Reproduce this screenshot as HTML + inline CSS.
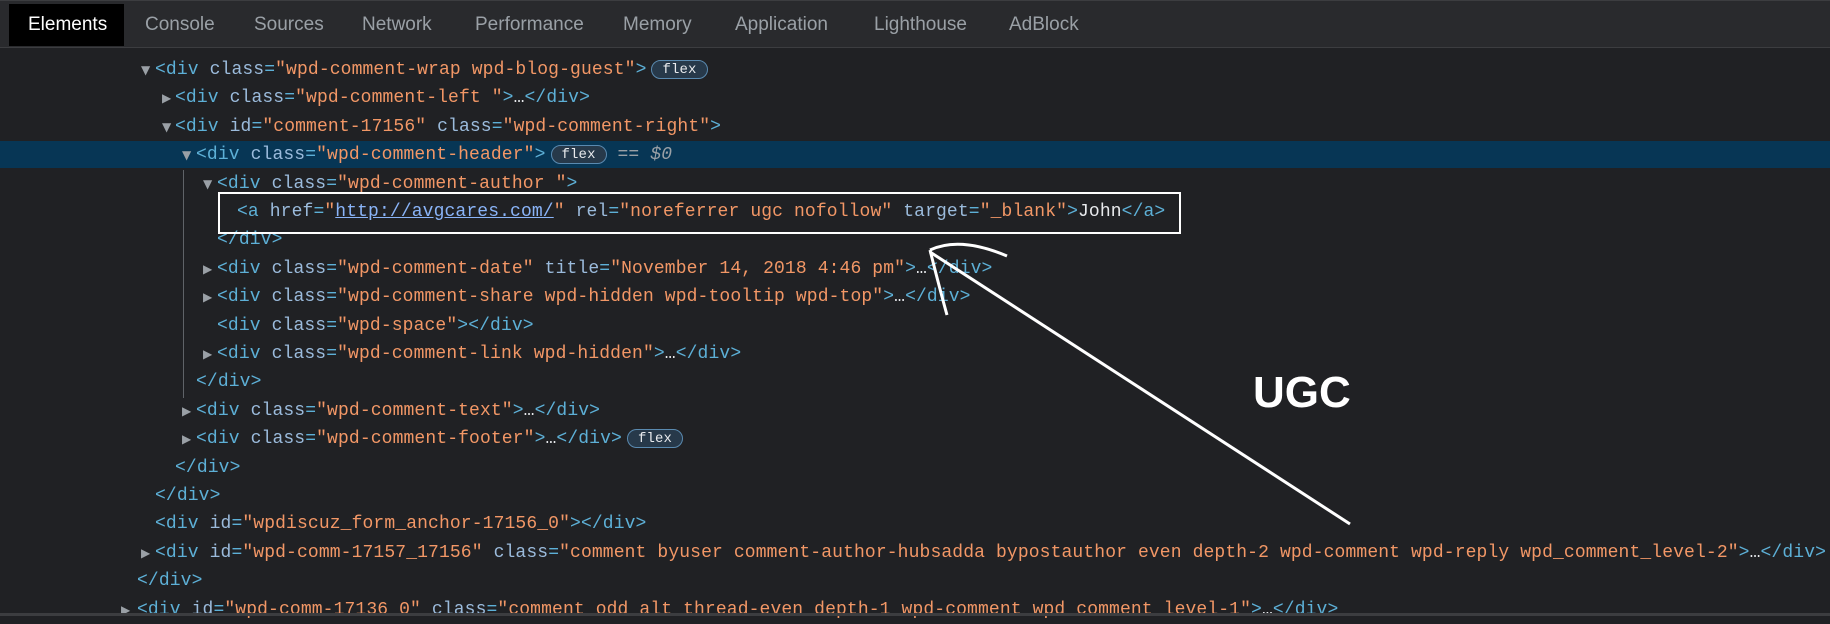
<!DOCTYPE html>
<html><head><meta charset="utf-8"><style>
html,body{margin:0;padding:0;width:1830px;height:616px;overflow:hidden;background:#202124;}
.tabs{position:absolute;left:0;top:0;width:1830px;height:48px;background:#292a2d;border-top:1px solid #3c3d40;border-bottom:1px solid #3c3d40;box-sizing:border-box;font-family:"Liberation Sans",sans-serif;font-size:19px;color:#9aa0a6;}
.tabs span{position:absolute;top:13px;}
.tabs .act{position:absolute;left:9px;top:3px;width:115px;height:42px;background:#000;color:#fff;}
.tabs .act span{left:19px;top:10px;}
.row{position:absolute;left:0;height:28px;line-height:28px;white-space:pre;font-family:"Liberation Mono",monospace;font-size:18px;letter-spacing:0.12px;color:#5db0d7;}
.sel{position:absolute;left:0;top:141px;width:1830px;height:27px;background:#073655;}
.an{color:#9bbbdc}.av{color:#f29766}.w{color:#e8eaed}
.tri{position:absolute;font-size:12px;color:#9aa0a6;font-family:"DejaVu Sans",sans-serif;}
.flex{display:inline-block;height:19px;line-height:18px;padding:0 10px;margin-left:5px;border:1px solid #5a8ab0;border-radius:10px;background:#27394a;color:#e8eaed;font-size:14px;vertical-align:middle;box-sizing:border-box;}
.link{color:#8ab4f8;text-decoration:underline;}
</style></head><body>
<div class="tabs">
<div class="act"><span>Elements</span></div>
<span style="left:145px">Console</span>
<span style="left:254px">Sources</span>
<span style="left:362px">Network</span>
<span style="left:475px">Performance</span>
<span style="left:623px">Memory</span>
<span style="left:735px">Application</span>
<span style="left:874px">Lighthouse</span>
<span style="left:1009px">AdBlock</span>
</div>
<div class="sel"></div>
<div style="position:absolute;left:183px;top:170px;width:1px;height:228px;background:#5f6368"></div>

<div class="row" style="top:56px;left:155px">&lt;div <span class="an">class</span>=<span class="av">"wpd-comment-wrap wpd-blog-guest"</span>&gt;<span class="flex">flex</span></div>
<div class="tri" style="left:141px;top:63px">▼</div>
<div class="row" style="top:84px;left:175px">&lt;div <span class="an">class</span>=<span class="av">"wpd-comment-left "</span>&gt;<span class="w">…</span>&lt;/div&gt;</div>
<div class="tri" style="left:162px;top:91px">▶</div>
<div class="row" style="top:113px;left:175px">&lt;div <span class="an">id</span>=<span class="av">"comment-17156"</span> <span class="an">class</span>=<span class="av">"wpd-comment-right"</span>&gt;</div>
<div class="tri" style="left:162px;top:120px">▼</div>
<div class="row" style="top:141px;left:196px">&lt;div <span class="an">class</span>=<span class="av">"wpd-comment-header"</span>&gt;<span class="flex">flex</span><span style="color:#9aa0a6"> == <i>$0</i></span></div>
<div class="tri" style="left:182px;top:148px">▼</div>
<div class="row" style="top:170px;left:217px">&lt;div <span class="an">class</span>=<span class="av">"wpd-comment-author "</span>&gt;</div>
<div class="tri" style="left:203px;top:177px">▼</div>
<div class="row" style="top:198px;left:237px">&lt;a <span class="an">href</span>=<span class="av">"<span class="link">http://avgcares.com/</span>"</span> <span class="an">rel</span>=<span class="av">"noreferrer ugc nofollow"</span> <span class="an">target</span>=<span class="av">"_blank"</span>&gt;<span class="w">John</span>&lt;/a&gt;</div>
<div class="row" style="top:226px;left:217px">&lt;/div&gt;</div>
<div class="row" style="top:255px;left:217px">&lt;div <span class="an">class</span>=<span class="av">"wpd-comment-date"</span> <span class="an">title</span>=<span class="av">"November 14, 2018 4:46 pm"</span>&gt;<span class="w">…</span>&lt;/div&gt;</div>
<div class="tri" style="left:203px;top:262px">▶</div>
<div class="row" style="top:283px;left:217px">&lt;div <span class="an">class</span>=<span class="av">"wpd-comment-share wpd-hidden wpd-tooltip wpd-top"</span>&gt;<span class="w">…</span>&lt;/div&gt;</div>
<div class="tri" style="left:203px;top:290px">▶</div>
<div class="row" style="top:312px;left:217px">&lt;div <span class="an">class</span>=<span class="av">"wpd-space"</span>&gt;&lt;/div&gt;</div>
<div class="row" style="top:340px;left:217px">&lt;div <span class="an">class</span>=<span class="av">"wpd-comment-link wpd-hidden"</span>&gt;<span class="w">…</span>&lt;/div&gt;</div>
<div class="tri" style="left:203px;top:347px">▶</div>
<div class="row" style="top:368px;left:196px">&lt;/div&gt;</div>
<div class="row" style="top:397px;left:196px">&lt;div <span class="an">class</span>=<span class="av">"wpd-comment-text"</span>&gt;<span class="w">…</span>&lt;/div&gt;</div>
<div class="tri" style="left:182px;top:404px">▶</div>
<div class="row" style="top:425px;left:196px">&lt;div <span class="an">class</span>=<span class="av">"wpd-comment-footer"</span>&gt;<span class="w">…</span>&lt;/div&gt;<span class="flex">flex</span></div>
<div class="tri" style="left:182px;top:432px">▶</div>
<div class="row" style="top:454px;left:175px">&lt;/div&gt;</div>
<div class="row" style="top:482px;left:155px">&lt;/div&gt;</div>
<div class="row" style="top:510px;left:155px">&lt;div <span class="an">id</span>=<span class="av">"wpdiscuz_form_anchor-17156_0"</span>&gt;&lt;/div&gt;</div>
<div class="row" style="top:539px;left:155px">&lt;div <span class="an">id</span>=<span class="av">"wpd-comm-17157_17156"</span> <span class="an">class</span>=<span class="av">"comment byuser comment-author-hubsadda bypostauthor even depth-2 wpd-comment wpd-reply wpd_comment_level-2"</span>&gt;<span class="w">…</span>&lt;/div&gt;</div>
<div class="tri" style="left:141px;top:546px">▶</div>
<div class="row" style="top:567px;left:137px">&lt;/div&gt;</div>
<div class="row" style="top:596px;left:137px">&lt;div <span class="an">id</span>=<span class="av">"wpd-comm-17136_0"</span> <span class="an">class</span>=<span class="av">"comment odd alt thread-even depth-1 wpd-comment wpd_comment_level-1"</span>&gt;<span class="w">…</span>&lt;/div&gt;</div>
<div class="tri" style="left:121px;top:603px">▶</div>
<div style="position:absolute;left:0;top:613px;width:1830px;height:3px;background:#3c3d40"></div>

<div style="position:absolute;left:218px;top:192px;width:963px;height:42px;border:2.5px solid #fff;box-sizing:border-box"></div>
<svg style="position:absolute;left:0;top:0" width="1830" height="616">
<path d="M1350 524 L930 252" stroke="#fff" stroke-width="3" fill="none"/>
<path d="M930 250 Q 960 236 1007 256" stroke="#fff" stroke-width="3" fill="none"/>
<path d="M930 250 Q 940 290 947 315" stroke="#fff" stroke-width="3" fill="none"/>
<text x="1253" y="407" font-family="Liberation Sans, sans-serif" font-weight="bold" font-size="44" fill="#fff">UGC</text>
</svg>
</body></html>
